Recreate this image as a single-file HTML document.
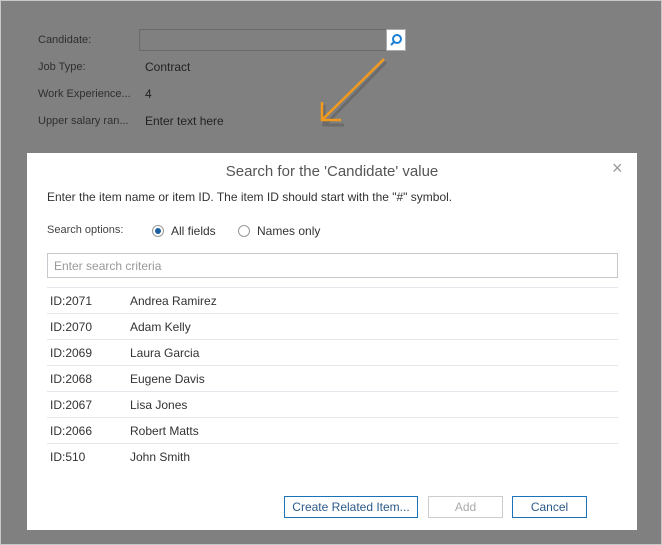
<!DOCTYPE html>
<html><head><style>
body{margin:0;width:662px;height:545px;overflow:hidden;font-family:"Liberation Sans",sans-serif;}
.page{position:absolute;left:0;top:0;width:662px;height:545px;box-sizing:border-box;background:#808080;border:1px solid #c8c8c8;}
.a{position:absolute;left:-1px;top:-1px;width:662px;height:545px}
.t{position:absolute;font-size:12px;color:#333;white-space:nowrap}
.dlg{position:absolute;left:27px;top:153px;width:610px;height:377px;background:#fff}
.row{position:absolute;left:20px;width:571px;height:26px;border-top:1px solid #e3e7ec;font-size:12px;color:#333}
.row span{position:absolute;top:6px}
.btn{position:absolute;top:343px;height:20px;border:1px solid #1a73b8;font-size:12px;color:#2b5a8a;text-align:center;line-height:20px;background:#fff}
</style></head><body>
<div class="page"><div class="a">
<div class="t" style="left:38px;top:34px;font-size:11px;color:#2f2f2f">Candidate:</div>
<div style="position:absolute;left:139px;top:29px;width:246px;height:20px;border:1px solid #6a6a6a;background:#808080"></div>
<div style="position:absolute;left:386px;top:29px;width:18px;height:20px;background:#fff;border:1px solid #aaa"><svg width="18" height="20"><circle cx="10" cy="9" r="4" stroke="#1a7fd4" stroke-width="2" fill="none"/><line x1="7" y1="12" x2="4" y2="15" stroke="#1a7fd4" stroke-width="2"/></svg></div>
<div class="t" style="left:38px;top:61px;font-size:11px;color:#2f2f2f">Job Type:</div>
<div class="t" style="left:145px;top:60px;color:#222">Contract</div>
<div class="t" style="left:38px;top:88px;font-size:11px;color:#2f2f2f">Work Experience...</div>
<div class="t" style="left:145px;top:87px;color:#222">4</div>
<div class="t" style="left:38px;top:115px;font-size:11px;color:#2f2f2f">Upper salary ran...</div>
<div class="t" style="left:145px;top:114px;color:#222">Enter text here</div>
<svg style="position:absolute;left:310px;top:55px" width="90" height="80"><g stroke="#555" stroke-width="3" fill="none" opacity=".5"><path d="M76 7 L15 70 M14 50 L14 70 L34 70"/></g><g stroke="#f29a1e" stroke-width="2.5" fill="none"><path d="M74 4 L13 64 M12 47 L12 65 L31 65"/></g></svg>
<div class="dlg">
<div class="t" style="left:0;width:610px;text-align:center;top:10px;font-size:15px;color:#555">Search for the 'Candidate' value</div>
<div class="t" style="left:585px;top:5px;font-size:18px;color:#999">×</div>
<div class="t" style="left:20px;top:37px;color:#333">Enter the item name or item ID. The item ID should start with the "#" symbol.</div>
<div class="t" style="left:20px;top:71px;font-size:11px;color:#444">Search options:</div>
<div style="position:absolute;left:125px;top:72px;width:10px;height:10px;border:1px solid #999;border-radius:50%"><div style="margin:2px;width:6px;height:6px;border-radius:50%;background:#1b5f9e"></div></div>
<div class="t" style="left:144px;top:71px">All fields</div>
<div style="position:absolute;left:211px;top:72px;width:10px;height:10px;border:1px solid #999;border-radius:50%"></div>
<div class="t" style="left:230px;top:71px">Names only</div>
<div style="position:absolute;left:20px;top:100px;width:569px;height:23px;border:1px solid #c5c9cd"><span class="t" style="left:6px;top:5px;color:#999">Enter search criteria</span></div>
<div class="row" style="top:134px"><span style="left:3px">ID:2071</span><span style="left:83px">Andrea Ramirez</span></div>
<div class="row" style="top:160px"><span style="left:3px">ID:2070</span><span style="left:83px">Adam Kelly</span></div>
<div class="row" style="top:186px"><span style="left:3px">ID:2069</span><span style="left:83px">Laura Garcia</span></div>
<div class="row" style="top:212px"><span style="left:3px">ID:2068</span><span style="left:83px">Eugene Davis</span></div>
<div class="row" style="top:238px"><span style="left:3px">ID:2067</span><span style="left:83px">Lisa Jones</span></div>
<div class="row" style="top:264px"><span style="left:3px">ID:2066</span><span style="left:83px">Robert Matts</span></div>
<div class="row" style="top:290px"><span style="left:3px">ID:510</span><span style="left:83px">John Smith</span></div>
<div class="btn" style="left:257px;width:132px">Create Related Item...</div>
<div class="btn" style="left:401px;width:73px;border-color:#ccc;color:#aaa">Add</div>
<div class="btn" style="left:485px;width:73px">Cancel</div>
</div>
</div></div>
</body></html>
